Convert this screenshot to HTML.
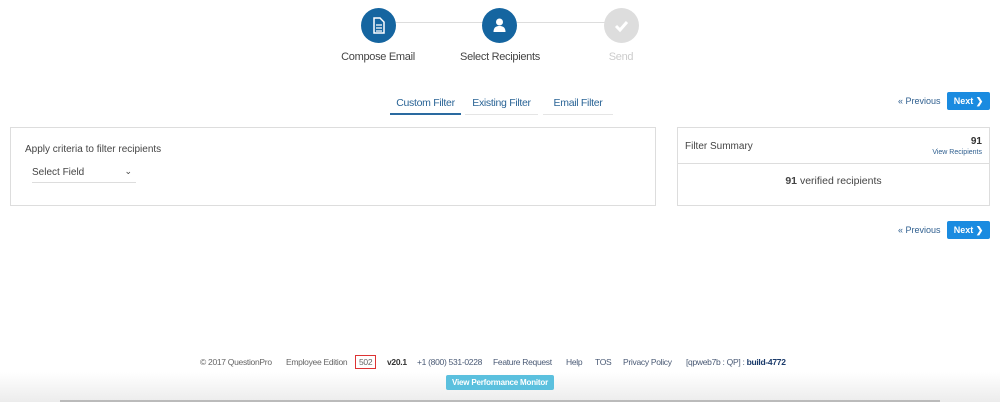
<!DOCTYPE html>
<html><head><style>
*{margin:0;padding:0;box-sizing:border-box}
body{width:1000px;height:402px;background:#fff;font-family:"Liberation Sans",sans-serif;position:relative;overflow:hidden;color:#333}
.abs{position:absolute}
.circ{position:absolute;width:35px;height:35px;border-radius:50%;top:8px}
.lbl{position:absolute;top:51px;font-size:11px;color:#444;width:120px;text-align:center;letter-spacing:-0.3px}
.tab{position:absolute;top:97px;font-size:10.5px;color:#2a6496;text-align:center;height:18px;border-bottom:1px solid #e5e5e5;letter-spacing:-0.3px}
.next{position:absolute;left:947px;width:43px;height:18px;background:#1a8be0;border-radius:2px;color:#fff;font-size:9px;font-weight:bold;text-align:center;line-height:18px}
.prev{position:absolute;left:898px;font-size:9px;color:#2f5f8f}
.foot{position:absolute;top:357px;font-size:8.5px;color:#4a5a75;letter-spacing:-0.3px;white-space:nowrap}
</style></head><body>
<div class="abs" style="left:396px;top:22px;width:88px;height:1px;background:#ddd"></div>
<div class="abs" style="left:517px;top:22px;width:88px;height:1px;background:#ddd"></div>
<div class="circ" style="left:361px;background:#1565a0"><svg width="35" height="35" viewBox="0 0 35 35"><path d="M13 10h6l4 4v11h-10z" fill="none" stroke="#fff" stroke-width="1.5"/><path d="M15 17h6M15 20h6M15 23h6" stroke="#fff" stroke-width="1.2"/></svg></div>
<div class="circ" style="left:482px;background:#1565a0"><svg width="35" height="35" viewBox="0 0 35 35"><circle cx="17.5" cy="14" r="3.5" fill="#fff"/><path d="M11.5 24c0-5 3-6 6-6s6 1 6 6z" fill="#fff"/></svg></div>
<div class="circ" style="left:604px;background:#ddd"><svg width="35" height="35" viewBox="0 0 35 35"><path d="M12 18l4 4 7-8" fill="none" stroke="#fff" stroke-width="3"/></svg></div>
<div class="lbl" style="left:318px">Compose Email</div>
<div class="lbl" style="left:440px">Select Recipients</div>
<div class="lbl" style="left:561px;color:#ccc">Send</div>
<div class="tab" style="left:390px;width:71px;border-bottom:2px solid #2a6aa0">Custom Filter</div>
<div class="tab" style="left:465px;width:73px">Existing Filter</div>
<div class="tab" style="left:543px;width:70px">Email Filter</div>
<div class="prev" style="top:96px">« Previous</div>
<div class="next" style="top:92px">Next ❯</div>
<div class="abs" style="left:10px;top:127px;width:646px;height:79px;border:1px solid #ddd">
<div class="abs" style="left:14px;top:16px;font-size:10px;color:#444">Apply criteria to filter recipients</div>
<div class="abs" style="left:21px;top:39px;width:104px;height:16px;border-bottom:1px solid #ddd;font-size:10px;color:#444">Select Field<span style="position:absolute;right:4px;top:-1px;font-size:9px">⌄</span></div>
</div>
<div class="abs" style="left:677px;top:127px;width:313px;height:79px;border:1px solid #ddd">
<div class="abs" style="left:7px;top:13px;font-size:10px;color:#444">Filter Summary</div>
<div class="abs" style="right:7px;top:8px;font-size:10px;font-weight:bold;color:#333">91</div>
<div class="abs" style="right:7px;top:21px;font-size:7px;color:#2f5f8f">View Recipients</div>
<div class="abs" style="left:0;top:35px;width:100%;height:1px;background:#ddd"></div>
<div class="abs" style="left:0;top:47px;width:100%;text-align:center;font-size:10.5px;color:#444"><b>91</b> verified recipients</div>
</div>
<div class="prev" style="top:225px">« Previous</div>
<div class="next" style="top:221px">Next ❯</div>
<div class="abs" style="left:0;top:372px;width:1000px;height:30px;background:linear-gradient(#fff,#ececec)"></div>
<div class="abs" style="left:60px;top:400px;width:880px;height:2px;background:#bbb"></div>
<div class="foot" style="left:200px;color:#666">© 2017 QuestionPro</div>
<div class="foot" style="left:286px;color:#666">Employee Edition</div>
<div class="foot" style="left:355px;top:355px;border:1px solid #d33;padding:1px 3px;color:#666">502</div>
<div class="foot" style="left:387px;font-weight:bold;color:#333">v20.1</div>
<div class="foot" style="left:417px">+1 (800) 531-0228</div>
<div class="foot" style="left:493px">Feature Request</div>
<div class="foot" style="left:566px">Help</div>
<div class="foot" style="left:595px">TOS</div>
<div class="foot" style="left:623px">Privacy Policy</div>
<div class="foot" style="left:686px">[qpweb7b : QP] : <b style="color:#1a3a6a">build-4772</b></div>
<div class="abs" style="left:446px;top:375px;width:108px;height:15px;background:#5bc0de;border-radius:2px;color:#fff;font-size:8px;font-weight:bold;text-align:center;line-height:15px;letter-spacing:-0.2px">View Performance Monitor</div>
</body></html>
